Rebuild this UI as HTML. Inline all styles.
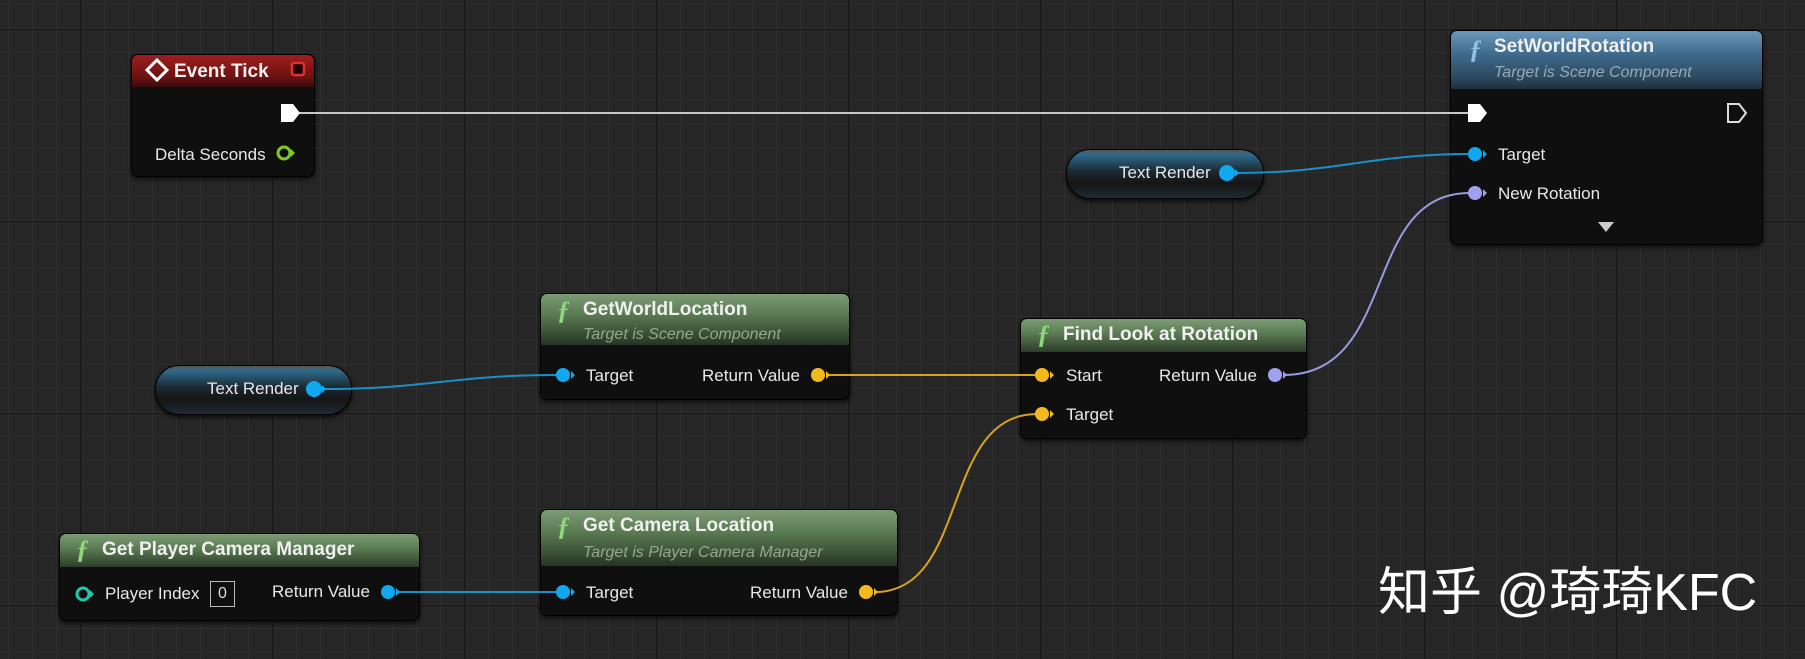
<!DOCTYPE html>
<html><head><meta charset="utf-8"><style>
html,body{margin:0;padding:0;}
body{width:1805px;height:659px;overflow:hidden;position:relative;font-family:"Liberation Sans","Noto Sans CJK SC",sans-serif;
background-color:#262626;
background-image:
linear-gradient(90deg,#161616 0,#161616 1px,transparent 1px),
linear-gradient(0deg,transparent 191px,#161616 191px,#161616 192px,transparent 192px),
linear-gradient(90deg,#2f2f2f 0,#2f2f2f 1px,transparent 1px),
linear-gradient(0deg,transparent 23px,#2f2f2f 23px);
background-size:192px 192px,192px 192px,24px 24px,24px 24px;
background-position:80px 0,0 29px,8px 0,0 4px;}
.node{position:absolute;background:rgba(14,14,14,0.93);border:1px solid #000;border-radius:7px;box-shadow:0 2px 4px rgba(0,0,0,.7);overflow:hidden;color:#eee;}
.hdr{position:absolute;left:0;right:0;top:0;}
.t{position:absolute;font-weight:bold;font-size:19px;color:#f0f0f0;white-space:nowrap;}
.s{position:absolute;font-style:italic;font-size:16px;white-space:nowrap;}
.l{position:absolute;font-size:17px;color:#e8e8e8;white-space:nowrap;}
.f{position:absolute;font-family:"Liberation Serif",serif;font-style:italic;font-weight:bold;font-size:26px;}
.pill{position:absolute;border-radius:24px;border:1px solid #000;background:linear-gradient(180deg,#555 0,#2f6a8c 10%,#1b2830 45%,#151515 70%,#1c2b33 100%);box-shadow:0 2px 4px rgba(0,0,0,.8);}
svg{position:absolute;left:0;top:0;}
</style></head><body>

<div class="node" style="left:131px;top:54px;width:182px;height:121px;">
 <div class="hdr" style="height:32px;background:linear-gradient(180deg,#a01e1e,#6a1212 70%,#3a0c0c);"></div>
 <div class="t" style="left:42px;top:6px;">Event Tick</div>
 <div class="l" style="left:23px;top:90px;">Delta Seconds</div>
</div>

<div class="node" style="left:1450px;top:30px;width:311px;height:213px;">
 <div class="hdr" style="height:58px;background:linear-gradient(180deg,#6a98bb 0,#3f6a8c 40%,#2c4a60 80%,#1d3040);"></div>
 <div class="f" style="left:18px;top:4px;color:#8ec0ea;">ƒ</div>
 <div class="t" style="left:43px;top:5px;">SetWorldRotation</div>
 <div class="s" style="left:43px;top:33px;color:#9aa8b0;">Target is Scene Component</div>
 <div class="l" style="left:47px;top:114px;">Target</div>
 <div class="l" style="left:47px;top:153px;">New Rotation</div>
</div>

<div class="pill" style="left:1066px;top:149px;width:196px;height:48px;"></div>
<div class="l" style="left:1119px;top:163px;">Text Render</div>

<div class="node" style="left:540px;top:293px;width:308px;height:105px;">
 <div class="hdr" style="height:51px;background:linear-gradient(180deg,#7d9c76 0,#5a7a52 40%,#3c5338 75%,#263424);"></div>
 <div class="f" style="left:16px;top:2px;color:#8fd680;">ƒ</div>
 <div class="t" style="left:42px;top:5px;">GetWorldLocation</div>
 <div class="s" style="left:42px;top:32px;color:#98a68f;">Target is Scene Component</div>
 <div class="l" style="left:45px;top:72px;">Target</div>
 <div class="l" style="left:161px;top:72px;">Return Value</div>
</div>

<div class="node" style="left:1020px;top:318px;width:285px;height:119px;">
 <div class="hdr" style="height:33px;background:linear-gradient(180deg,#7d9c76 0,#5a7a52 45%,#2c3c29);"></div>
 <div class="f" style="left:16px;top:1px;color:#8fd680;">ƒ</div>
 <div class="t" style="left:42px;top:5px;">Find Look at Rotation</div>
 <div class="l" style="left:45px;top:47px;">Start</div>
 <div class="l" style="left:138px;top:47px;">Return Value</div>
 <div class="l" style="left:45px;top:86px;">Target</div>
</div>

<div class="pill" style="left:155px;top:365px;width:195px;height:48px;"></div>
<div class="l" style="left:207px;top:379px;">Text Render</div>

<div class="node" style="left:59px;top:533px;width:359px;height:86px;">
 <div class="hdr" style="height:33px;background:linear-gradient(180deg,#7d9c76 0,#5a7a52 45%,#2c3c29);"></div>
 <div class="f" style="left:16px;top:1px;color:#8fd680;">ƒ</div>
 <div class="t" style="left:42px;top:5px;">Get Player Camera Manager</div>
 <div class="l" style="left:45px;top:50px;">Player Index</div>
 <div style="position:absolute;left:150px;top:47px;width:23px;height:24px;border:1px solid #bbb;color:#ddd;font-size:16px;text-align:center;line-height:24px;">0</div>
 <div class="l" style="left:212px;top:48px;">Return Value</div>
</div>

<div class="node" style="left:540px;top:509px;width:356px;height:105px;">
 <div class="hdr" style="height:56px;background:linear-gradient(180deg,#7d9c76 0,#5a7a52 40%,#3c5338 75%,#263424);"></div>
 <div class="f" style="left:16px;top:2px;color:#8fd680;">ƒ</div>
 <div class="t" style="left:42px;top:5px;">Get Camera Location</div>
 <div class="s" style="left:42px;top:34px;color:#98a68f;">Target is Player Camera Manager</div>
 <div class="l" style="left:45px;top:73px;">Target</div>
 <div class="l" style="left:209px;top:73px;">Return Value</div>
</div>

<svg width="1805" height="659" viewBox="0 0 1805 659">
 <g fill="none" stroke-width="2">
  <path d="M298 113 L1470 113" stroke="#c8c8c8"/>
  <path d="M1234 173 C1340 173 1370 154 1470 154" stroke="#1a8fc8"/>
  <path d="M323 389 C430 389 450 375 558 375" stroke="#1a8fc8"/>
  <path d="M828 375 L1037 375" stroke="#d9a41c"/>
  <path d="M397 592 L558 592" stroke="#1a8fc8"/>
  <path d="M875 592 C970 592 940 414 1037 414" stroke="#d9a41c"/>
  <path d="M1283 375 C1400 375 1360 193 1470 193" stroke="#9a9ae0"/>
 </g>
 <path d="M157 60 L167 70 L157 80 L147 70 Z" fill="none" stroke="#fff" stroke-width="3"/>
 <rect x="292" y="63" width="12" height="12" fill="#200" stroke="#e03030" stroke-width="2.5" rx="2"/>
 <path d="M281 104 L293 104 L300 113 L293 122 L281 122 Z" fill="#fff"/>
 <circle cx="284" cy="153" r="6" fill="none" stroke="#7fc82a" stroke-width="3"/><path d="M291 149 L295 153 L291 157Z" fill="#7fc82a"/>
 <path d="M1468 104 L1480 104 L1487 113 L1480 122 L1468 122 Z" fill="#fff"/>
 <path d="M1728 104 L1739 104 L1746 113 L1739 122 L1728 122 Z" fill="none" stroke="#ddd" stroke-width="2"/>
 <circle cx="1475" cy="154" r="7" fill="#10a8f0"/><path d="M1483 150 L1487 154 L1483 158Z" fill="#10a8f0"/>
 <circle cx="1475" cy="193" r="7" fill="#a0a0f0"/><path d="M1483 189 L1487 193 L1483 197Z" fill="#a0a0f0"/>
 <path d="M1598 222 L1614 222 L1606 232 Z" fill="#ccc"/>
 <circle cx="1227" cy="173" r="8" fill="#10a8f0"/><path d="M1235 169 L1239 173 L1235 177Z" fill="#10a8f0"/>
 <circle cx="314" cy="389" r="8" fill="#10a8f0"/><path d="M322 385 L326 389 L322 393Z" fill="#10a8f0"/>
 <circle cx="563" cy="375" r="7" fill="#10a8f0"/><path d="M571 371 L575 375 L571 379Z" fill="#10a8f0"/>
 <circle cx="818" cy="375" r="7" fill="#f2b91c"/><path d="M826 371 L830 375 L826 379Z" fill="#f2b91c"/>
 <circle cx="1042" cy="375" r="7" fill="#f2b91c"/><path d="M1050 371 L1054 375 L1050 379Z" fill="#f2b91c"/>
 <circle cx="1042" cy="414" r="7" fill="#f2b91c"/><path d="M1050 410 L1054 414 L1050 418Z" fill="#f2b91c"/>
 <circle cx="1275" cy="375" r="7" fill="#a0a0f0"/><path d="M1283 371 L1287 375 L1283 379Z" fill="#a0a0f0"/>
 <circle cx="83" cy="594" r="6" fill="none" stroke="#1fc8a8" stroke-width="3"/><path d="M90 590 L94 594 L90 598Z" fill="#1fc8a8"/>
 <circle cx="388" cy="592" r="7" fill="#10a8f0"/><path d="M396 588 L400 592 L396 596Z" fill="#10a8f0"/>
 <circle cx="563" cy="592" r="7" fill="#10a8f0"/><path d="M571 588 L575 592 L571 596Z" fill="#10a8f0"/>
 <circle cx="866" cy="592" r="7" fill="#f2b91c"/><path d="M874 588 L878 592 L874 596Z" fill="#f2b91c"/>
</svg>

<div style="position:absolute;left:1378px;top:550px;font-size:52px;color:#fff;white-space:nowrap;font-family:'Liberation Sans','Noto Sans CJK SC',sans-serif;">知乎 @琦琦KFC</div>
</body></html>
